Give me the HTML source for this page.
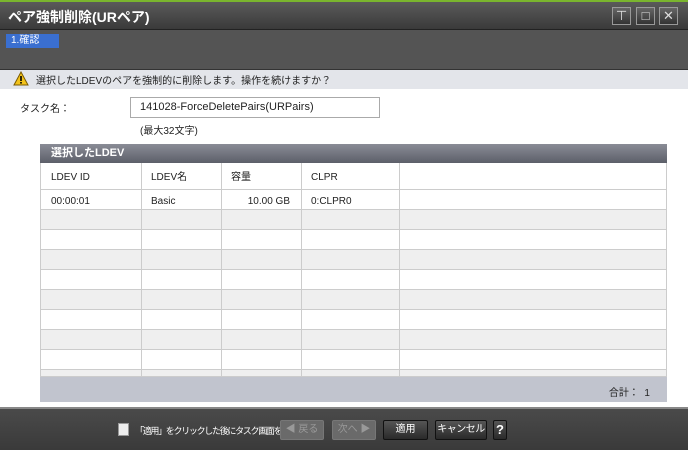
<!DOCTYPE html>
<html><head><meta charset="utf-8"><style>
*{margin:0;padding:0;box-sizing:border-box}
body{width:688px;height:450px;position:relative;overflow:hidden;background:#fff;font-family:"Liberation Sans","Noto Sans CJK JP",sans-serif;font-size:11px;color:#222}
.a{position:absolute}
.title{left:0;top:0;width:688px;height:30px;background:linear-gradient(#5a5a5a,#3a3a3a);border-top:2px solid #7ab52e;border-bottom:1px solid #222}
.title span{position:absolute;left:8px;top:5px;color:#fff;font-size:14px;font-weight:bold}
.wb{top:7px;width:19px;height:18px;border:1px solid #999;background:linear-gradient(#666,#333);color:#ddd;font-size:13px;text-align:center;line-height:15px}
.step{left:0;top:30px;width:688px;height:39px;background:#545454}
.stepb{left:6px;top:34px;width:53px;height:14px;background:#3a6fd0;color:#fff;font-size:10px;padding-left:5px;line-height:14px}
.warn{left:0;top:69px;width:688px;height:20px;background:#e3e5ea;border-top:1px solid #333}
.tbl{left:40px;top:144px;width:627px}
.th{height:19px;background:linear-gradient(#8a8c96,#5c5f69);color:#fff;font-weight:bold;font-size:11px;padding-left:11px;line-height:19px}
.btn{top:420px;height:20px;border:1px solid #111;border-radius:2px;background:linear-gradient(#555,#2a2a2a);color:#fff;font-size:10px;text-align:center;line-height:18px;white-space:nowrap;overflow:hidden}
.dis{background:#6a6a6a;color:#999;border-color:#777}
</style></head><body>
<div class="a title"><span>ペア強制削除(URペア)</span></div>
<div class="a wb" style="left:612px">⊤</div>
<div class="a wb" style="left:636px">□</div>
<div class="a wb" style="left:659px">✕</div>
<div class="a step"></div>
<div class="a stepb">1.確認</div>
<div class="a warn"></div>
<svg class="a" style="left:13px;top:71px" width="16" height="15"><polygon points="8,1 15,14 1,14" fill="#f3c31a" stroke="#7a5a00"/><rect x="7.2" y="5" width="1.6" height="5" fill="#000"/><rect x="7.2" y="11" width="1.6" height="1.6" fill="#000"/></svg>
<div class="a" style="left:36px;top:72px;font-size:10px">選択したLDEVのペアを強制的に削除します。操作を続けますか？</div>
<div class="a" style="left:20px;top:100px;font-size:10px">タスク名：</div>
<div class="a" style="left:130px;top:97px;width:250px;height:21px;border:1px solid #aaa;padding:3px 9px;font-size:11px">141028-ForceDeletePairs(URPairs)</div>
<div class="a" style="left:140px;top:122px;font-size:10px">(最大32文字)</div>
<div class="a tbl">
<div class="th">選択したLDEV</div>
<svg width="627" height="214" style="display:block">
<rect width="627" height="214" fill="#fff"/>
<rect y="47" width="627" height="20" fill="#efefef"/><rect y="87" width="627" height="20" fill="#efefef"/><rect y="127" width="627" height="20" fill="#efefef"/><rect y="167" width="627" height="20" fill="#efefef"/><rect y="207" width="627" height="7" fill="#efefef"/>
<g stroke="#ccc"><line x1="0" y1="26.5" x2="627" y2="26.5"/><line x1="0" y1="46.5" x2="627" y2="46.5"/><line x1="0" y1="66.5" x2="627" y2="66.5"/><line x1="0" y1="86.5" x2="627" y2="86.5"/><line x1="0" y1="106.5" x2="627" y2="106.5"/><line x1="0" y1="126.5" x2="627" y2="126.5"/><line x1="0" y1="146.5" x2="627" y2="146.5"/><line x1="0" y1="166.5" x2="627" y2="166.5"/><line x1="0" y1="186.5" x2="627" y2="186.5"/><line x1="0" y1="206.5" x2="627" y2="206.5"/><line x1="0" y1="213.5" x2="627" y2="213.5"/>
<line x1="101.5" y1="0" x2="101.5" y2="214"/><line x1="181.5" y1="0" x2="181.5" y2="214"/><line x1="261.5" y1="0" x2="261.5" y2="214"/><line x1="359.5" y1="0" x2="359.5" y2="214"/><line x1="0.5" y1="0" x2="0.5" y2="214"/><line x1="626.5" y1="0" x2="626.5" y2="214"/></g>
<g font-size="10" fill="#222" font-family="Liberation Sans,Noto Sans CJK JP,sans-serif"><text x="11" y="17">LDEV ID</text><text x="111" y="17">LDEV名</text><text x="191" y="17">容量</text><text x="271" y="17">CLPR</text>
<text x="11" y="41">00:00:01</text><text x="111" y="41">Basic</text><text x="250" y="41" text-anchor="end">10.00 GB</text><text x="271" y="41">0:CLPR0</text></g>
</svg>
<div style="height:25px;background:#c1c4ce;text-align:right;padding:7px 17px 0 0;font-size:10px">合計：&nbsp; 1</div>
</div>
<div class="a" style="left:0;top:407px;width:688px;height:43px;background:linear-gradient(#4a4a4a,#3a3a3a);border-top:2px solid #888"></div>
<div class="a" style="left:118px;top:423px;width:11px;height:13px;background:#eee;border:1px solid #999"></div>
<div class="a" style="left:135px;top:424px;color:#fff;font-size:9px;letter-spacing:-1.3px;white-space:nowrap">「適用」をクリックした後にタスク画面を表示</div>
<div class="a btn dis" style="left:280px;width:44px">◀ 戻る</div>
<div class="a btn dis" style="left:332px;width:44px">次へ ▶</div>
<div class="a btn" style="left:383px;width:45px">適用</div>
<div class="a btn" style="left:435px;width:52px;letter-spacing:-0.5px">キャンセル</div>
<div class="a btn" style="left:493px;width:14px;font-weight:bold;font-size:13px">?</div>
</body></html>
